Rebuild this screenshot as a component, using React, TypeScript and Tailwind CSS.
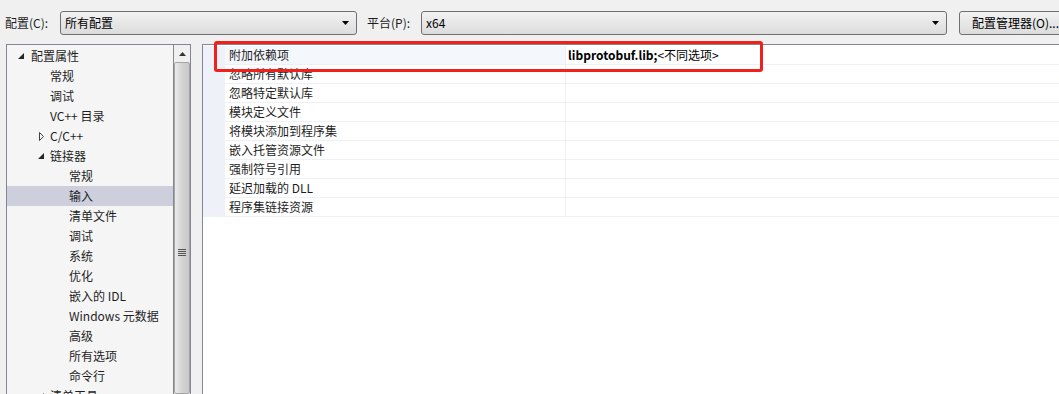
import React from "react";

const FONT = { fontFamily: '"Noto Sans CJK SC", "Liberation Sans", sans-serif' };

type TreeItem = { label: string; level: 0 | 1 | 2; arrow?: "open" | "closed"; selected?: boolean };

const TREE: TreeItem[] = [
  { label: "配置属性", level: 0, arrow: "open" },
  { label: "常规", level: 1 },
  { label: "调试", level: 1 },
  { label: "VC++ 目录", level: 1 },
  { label: "C/C++", level: 1, arrow: "closed" },
  { label: "链接器", level: 1, arrow: "open" },
  { label: "常规", level: 2 },
  { label: "输入", level: 2, selected: true },
  { label: "清单文件", level: 2 },
  { label: "调试", level: 2 },
  { label: "系统", level: 2 },
  { label: "优化", level: 2 },
  { label: "嵌入的 IDL", level: 2 },
  { label: "Windows 元数据", level: 2 },
  { label: "高级", level: 2 },
  { label: "所有选项", level: 2 },
  { label: "命令行", level: 2 },
  { label: "清单工具", level: 1, arrow: "open" },
];

const PROPS = [
  "附加依赖项",
  "忽略所有默认库",
  "忽略特定默认库",
  "模块定义文件",
  "将模块添加到程序集",
  "嵌入托管资源文件",
  "强制符号引用",
  "延迟加载的 DLL",
  "程序集链接资源",
];

function Combo({ text, width }: { text: string; width: string }) {
  return (
    <div
      className={`${width} h-[24px] shrink-0 flex items-center justify-between rounded-[3px] border border-[#707070] bg-gradient-to-b from-[#f2f2f2] to-[#dcdcdc] pl-[4px] pr-[7px] text-[12px] text-black`}
    >
      <span>{text}</span>
      <svg width="7" height="4" viewBox="0 0 7 4">
        <path d="M0 0h7L3.5 4z" fill="#000" />
      </svg>
    </div>
  );
}

function Arrow({ kind }: { kind: "open" | "closed" }) {
  if (kind === "open")
    return (
      <svg width="6" height="6" viewBox="0 0 6 6">
        <path d="M6 0v6H0z" fill="#262626" />
      </svg>
    );
  return (
    <svg width="5" height="9" viewBox="0 0 5 9">
      <path d="M0.5 0.5v8l4-4z" fill="none" stroke="#404040" />
    </svg>
  );
}

export default function App() {
  return (
    <div className="relative w-[1059px] h-[394px] overflow-hidden bg-[#f0f0f0] text-[12px] text-[#1e1e1e]" style={FONT}>
      {/* toolbar */}
      <div className="flex h-[44px] items-start overflow-hidden pt-[11px]">
        <span className="ml-[5px] mt-[3px] w-[55px] shrink-0">配置(C):</span>
        <Combo text="所有配置" width="w-[297px]" />
        <span className="ml-[10px] mt-[3px] w-[54px] shrink-0">平台(P):</span>
        <Combo text="x64" width="w-[526px]" />
        <div className="ml-[12px] h-[24px] w-[110px] shrink-0 rounded-[3px] border border-[#707070] bg-gradient-to-b from-[#f2f2f2] to-[#dcdcdc] pl-[12px] leading-[22px] text-black">
          配置管理器(O)...
        </div>
      </div>

      <div className="flex h-[350px]">
        {/* tree */}
        <div className="ml-[6px] flex w-[185px] shrink-0 border border-[#828790] border-b-0 bg-[#f5f5f5]">
          <div className="flex-1 pt-[1px]">
            {TREE.map((t, i) => (
              <div
                key={i}
                className={`relative flex h-[20px] items-center ${t.selected ? "bg-[#cdd0dc]" : ""}`}
                style={{ paddingLeft: t.level === 0 ? 24 : t.level === 1 ? 43 : 62 }}
              >
                {t.arrow && (
                  <span className="absolute flex w-[8px] items-center justify-center" style={{ left: t.level === 0 ? 10 : 30 }}>
                    <Arrow kind={t.arrow} />
                  </span>
                )}
                <span>{t.label}</span>
              </div>
            ))}
          </div>
          <div className="flex w-[17px] flex-col border-l border-[#828790] bg-[#f0f0f0]">
            <div className="flex h-[17px] items-center justify-center">
              <svg width="7" height="4" viewBox="0 0 7 4">
                <path d="M3.5 0L7 4H0z" fill="#333" />
              </svg>
            </div>
            <div className="flex flex-1 items-start justify-center rounded-[2px] border border-[#a6a6a6] bg-gradient-to-r from-[#eaeaea] via-[#d4d4d4] to-[#c8c8c8] pt-[186px]">
              <div className="flex w-[8px] flex-col gap-[1px]">
                <div className="h-[1px] bg-[#555]" />
                <div className="h-[1px] bg-[#555]" />
                <div className="h-[1px] bg-[#555]" />
                <div className="h-[1px] bg-[#555]" />
              </div>
            </div>
          </div>
        </div>

        {/* property grid */}
        <div className="ml-[11px] flex-1 border-l border-t border-[#828790] bg-white pt-[1px]">
          {PROPS.map((p, i) => (
            <div key={i} className="flex h-[19px]">
              <div className="w-[22px] shrink-0 bg-[#eef2f8]" />
              <div className={`flex w-[341px] shrink-0 items-center border-b border-r border-[#edf0f5] pl-[4px] ${i === 0 ? "bg-[#f4f7fb]" : ""}`}>
                {p}
              </div>
              <div className="flex flex-1 items-center border-b border-[#edf0f5] pl-[2px] text-black">
                {i === 0 && (
                  <>
                    <span className="font-bold">libprotobuf.lib;</span>
                    <span>&lt;不同选项&gt;</span>
                  </>
                )}
              </div>
            </div>
          ))}
        </div>
      </div>

      {/* red annotation */}
      <div className="absolute left-[214px] top-[41px] h-[31px] w-[549px] rounded-[3px] border-[3px] border-[#f0201c]" />
    </div>
  );
}
